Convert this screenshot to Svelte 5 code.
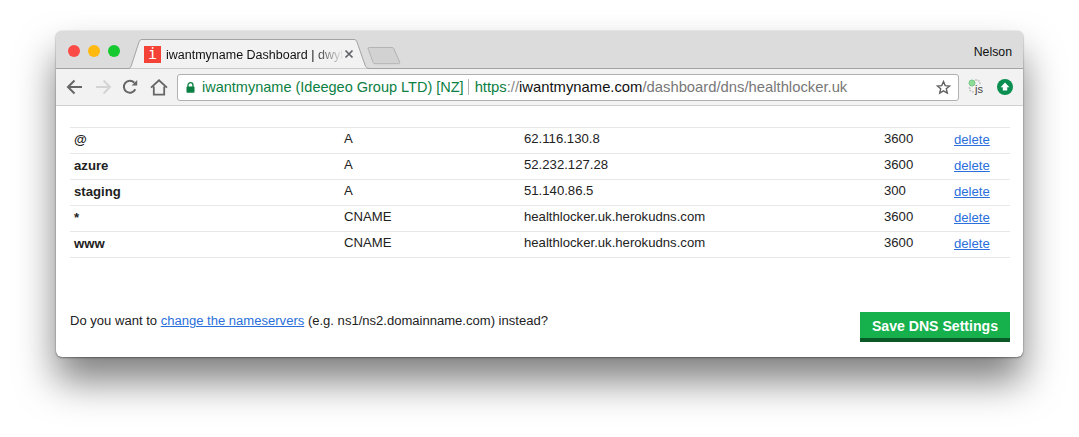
<script>
    const records = [
        { host: '@', type: 'A', value: '62.116.130.8', ttl: 3600 },
        { host: 'azure', type: 'A', value: '52.232.127.28', ttl: 3600 },
        { host: 'staging', type: 'A', value: '51.140.86.5', ttl: 300 },
        { host: '*', type: 'CNAME', value: 'healthlocker.uk.herokudns.com', ttl: 3600 },
        { host: 'www', type: 'CNAME', value: 'healthlocker.uk.herokudns.com', ttl: 3600 }
    ];
</script>

<div class="page">
    <div class="window">
        <!-- tab strip -->
        <div class="tabstrip">
            <div class="lights">
                <span class="light red"></span>
                <span class="light yellow"></span>
                <span class="light green"></span>
            </div>
            <div class="tab">
                <svg class="tab-shape" width="244" height="30" viewBox="0 0 244 30">
                    <path d="M0 29.5 H1 C3 29.5 3.5 28.5 4 27.5 L12 3 C12.6 1.3 13.5 .5 15 .5 H227 C228.5 .5 229.4 1.3 230 3 L238 26 C238.6 28 240 29.5 242 29.5 H244" fill="#f2f2f2" stroke="#a3a3a3" />
                </svg>
                <span class="favicon">i</span>
                <span class="tab-title">iwantmyname Dashboard | dwyl</span>
                <svg class="tab-close" width="10" height="10" viewBox="0 0 10 10">
                    <path d="M1.5 1.5 L8.5 8.5 M8.5 1.5 L1.5 8.5" stroke="#5f6368" stroke-width="1.7" />
                </svg>
            </div>
            <svg class="newtab" width="34" height="18" viewBox="0 0 34 18">
                <path d="M1 1.5 C1 1 1.4 .5 2 .5 H25 C26 .5 26.4 1 26.8 1.6 L32.6 15 C33 16 32.5 16.7 31.5 16.7 H8 C7 16.7 6.5 16.2 6.1 15.4 Z" fill="#d2d2d2" stroke="#b4b4b4" />
            </svg>
            <span class="profile">Nelson</span>
        </div>

        <!-- toolbar -->
        <div class="toolbar">
            <svg class="nav" width="18" height="16" viewBox="0 0 18 16">
                <path d="M16 8 H2.5 M8.5 1.5 L2 8 L8.5 14.5" fill="none" stroke="#666" stroke-width="2" />
            </svg>
            <svg class="nav" width="18" height="16" viewBox="0 0 18 16">
                <path d="M2 8 H15.5 M9.5 1.5 L16 8 L9.5 14.5" fill="none" stroke="#d4d4d4" stroke-width="2" />
            </svg>
            <svg class="nav" width="16" height="16" viewBox="0 0 16 16">
                <path d="M13.3 10.3 A6 6 0 1 1 12.3 3.6" fill="none" stroke="#666" stroke-width="2" />
                <path d="M9.6 6.6 H15.2 V1 Z" fill="#666" />
            </svg>
            <svg class="nav home" width="18" height="17" viewBox="0 0 18 17">
                <path d="M1 8.6 L9 1.3 L17 8.6 M3.8 7.4 V15.7 H14.2 V7.4" fill="none" stroke="#666" stroke-width="1.8" />
            </svg>
            <div class="omnibox">
                <svg class="lock" width="9" height="11" viewBox="0 0 9 11">
                    <path d="M2 5 V3.2 a2.5 2.5 0 0 1 5 0 V5" fill="none" stroke="#0b8043" stroke-width="1.3" />
                    <rect x="0.5" y="4.6" width="8" height="6.2" rx=".8" fill="#0b8043" />
                </svg>
                <span class="ev">iwantmyname (Ideegeo Group LTD) [NZ]</span>
                <span class="sep"></span>
                <span class="url"><span class="scheme">https</span><span class="slashes">://</span><span class="domain">iwantmyname.com</span>/dashboard/dns/healthlocker.uk</span>
                <svg class="star" width="15" height="15" viewBox="0 0 15 15">
                    <path d="M7.5 1.6 L9.2 5.6 L13.6 6 L10.3 8.8 L11.3 13.1 L7.5 10.8 L3.7 13.1 L4.7 8.8 L1.4 6 L5.8 5.6 Z" fill="none" stroke="#606060" stroke-width="1.4" />
                </svg>
            </div>
            <svg class="ext-js" width="20" height="18" viewBox="0 0 20 18">
                <circle cx="5" cy="5" r="3" fill="#8fdc98" stroke="#74c680" />
                <path d="M8 2 h3 l2 2 v3 M2.5 9 v3 l3 2 h2" fill="none" stroke="#c4c4c4" stroke-width="1.6" stroke-dasharray="2 1" />
                <text x="8" y="15" class="js">js</text>
            </svg>
            <svg class="ext-up" width="16" height="16" viewBox="0 0 16 16">
                <circle cx="8" cy="8" r="8" fill="#0b8f50" />
                <path d="M8 3.6 L12.4 8.2 H10.2 V11.6 H5.8 V8.2 H3.6 Z" fill="#fff" />
            </svg>
        </div>

        <!-- page content -->
        <div class="content">
            <table>
                <tbody>
                    {#each records as r}
                        <tr>
                            <td class="host">{r.host}</td>
                            <td class="type">{r.type}</td>
                            <td class="value">{r.value}</td>
                            <td class="ttl">{r.ttl}</td>
                            <td class="del"><a href="#delete">delete</a></td>
                        </tr>
                    {/each}
                </tbody>
            </table>
            <div class="footer">
                <p>Do you want to <a href="#ns">change the nameservers</a> (e.g. ns1/ns2.domainname.com) instead?</p>
                <button>Save DNS Settings</button>
            </div>
        </div>
    </div>
</div>

<style>
    :global(body) { margin: 0; background: #fff; font-family: "Liberation Sans", Arial, sans-serif; }

    .page { height: 437px; overflow: hidden; padding: 31px 56px 0; box-sizing: border-box; }
    .window { width: 967px; height: 326px; border-radius: 6px; background: #fff; box-shadow: 0 0 1px rgba(0, 0, 0, .45), 0 1px 2px rgba(0, 0, 0, .35), 0 24px 38px rgba(0, 0, 0, .5); }

    .tabstrip { height: 37px; display: flex; align-items: flex-start; background: #dcdcdc; border-radius: 6px 6px 0 0; border-bottom: 1px solid #a3a3a3; position: relative; }
    .lights { display: flex; gap: 8px; margin: 14px 0 0 12px; }
    .light { width: 12px; height: 12px; border-radius: 50%; }
    .red { background: #fc4a46; }
    .yellow { background: #ffb90f; }
    .green { background: #15c92e; }

    .tab { position: absolute; left: 71px; top: 8px; width: 244px; height: 30px; display: flex; align-items: center; }
    .tab-shape { position: absolute; left: 0; top: 0; }
    .favicon { position: relative; margin-left: 17px; width: 17px; height: 17px; background: #f44336; color: #fff; font: 15px/17px "DejaVu Sans Mono", monospace; text-align: center; }
    .tab-title { position: relative; top: 1px; margin-left: 5px; width: 178px; overflow: hidden; white-space: nowrap; font-size: 12.5px; color: #111; -webkit-mask-image: linear-gradient(to right, #000 82%, transparent 100%); mask-image: linear-gradient(to right, #000 82%, transparent 100%); }
    .tab-close { position: relative; }
    .newtab { position: absolute; left: 311px; top: 16px; }
    .profile { margin-left: auto; margin-top: 14px; margin-right: 11px; font-size: 12.3px; color: #111; }

    .toolbar { height: 36px; display: flex; align-items: center; background: #f2f2f2; border-bottom: 1px solid #d0d0d0; padding-left: 10px; }
    .nav { margin-right: 10px; flex: none; }
    .home { margin-left: 2px; margin-right: 9px; }
    .omnibox { width: 782px; height: 27px; box-sizing: border-box; display: flex; align-items: center; flex: none; background: #fff; border: 1px solid #b0b0b0; border-radius: 3px; white-space: nowrap; padding-left: 8px; }
    .lock { flex: none; }
    .ev { margin-left: 7px; color: #0b8043; font-size: 14.5px; }
    .sep { width: 1px; height: 16px; background: #b5b5b5; margin: 0 6px 0 4px; }
    .url { color: #777; font-size: 14.8px; }
    .scheme { color: #0b8043; }
    .slashes { color: #888; }
    .domain { color: #111; }
    .star { margin-left: auto; margin-right: 7px; }
    .ext-js { margin-left: 8px; flex: none; }
    .js { font-size: 11px; fill: #444; }
    .ext-up { margin-left: 10px; flex: none; }

    .content { padding: 21px 13px 0 14px; }
    table { width: 940px; border-collapse: collapse; table-layout: fixed; font-size: 13.15px; color: #222; border-top: 1px solid #e8e8e8; }
    tr { height: 26px; border-bottom: 1px solid #e8e8e8; box-sizing: border-box; }
    td { padding: 0 4px 4px; white-space: nowrap; }
    .host { width: 262px; font-weight: bold; padding-bottom: 2px; }
    .type { width: 172px; }
    .value { width: 352px; }
    .ttl { width: 62px; }
    .del { padding-bottom: 2px; }
    a { color: #2a6fdb; text-decoration: underline; }

    .footer { display: flex; justify-content: space-between; align-items: flex-start; margin-top: 54px; }
    .footer p { margin: 1px 0 0; font-size: 13.05px; line-height: 15px; color: #222; }
    button { width: 150px; height: 30px; padding: 2px 0 0; border: 0; border-bottom: 4px solid #0a5a28; background: #16b04c; color: #fff; font: bold 14.1px "Liberation Sans", Arial, sans-serif; }
</style>
